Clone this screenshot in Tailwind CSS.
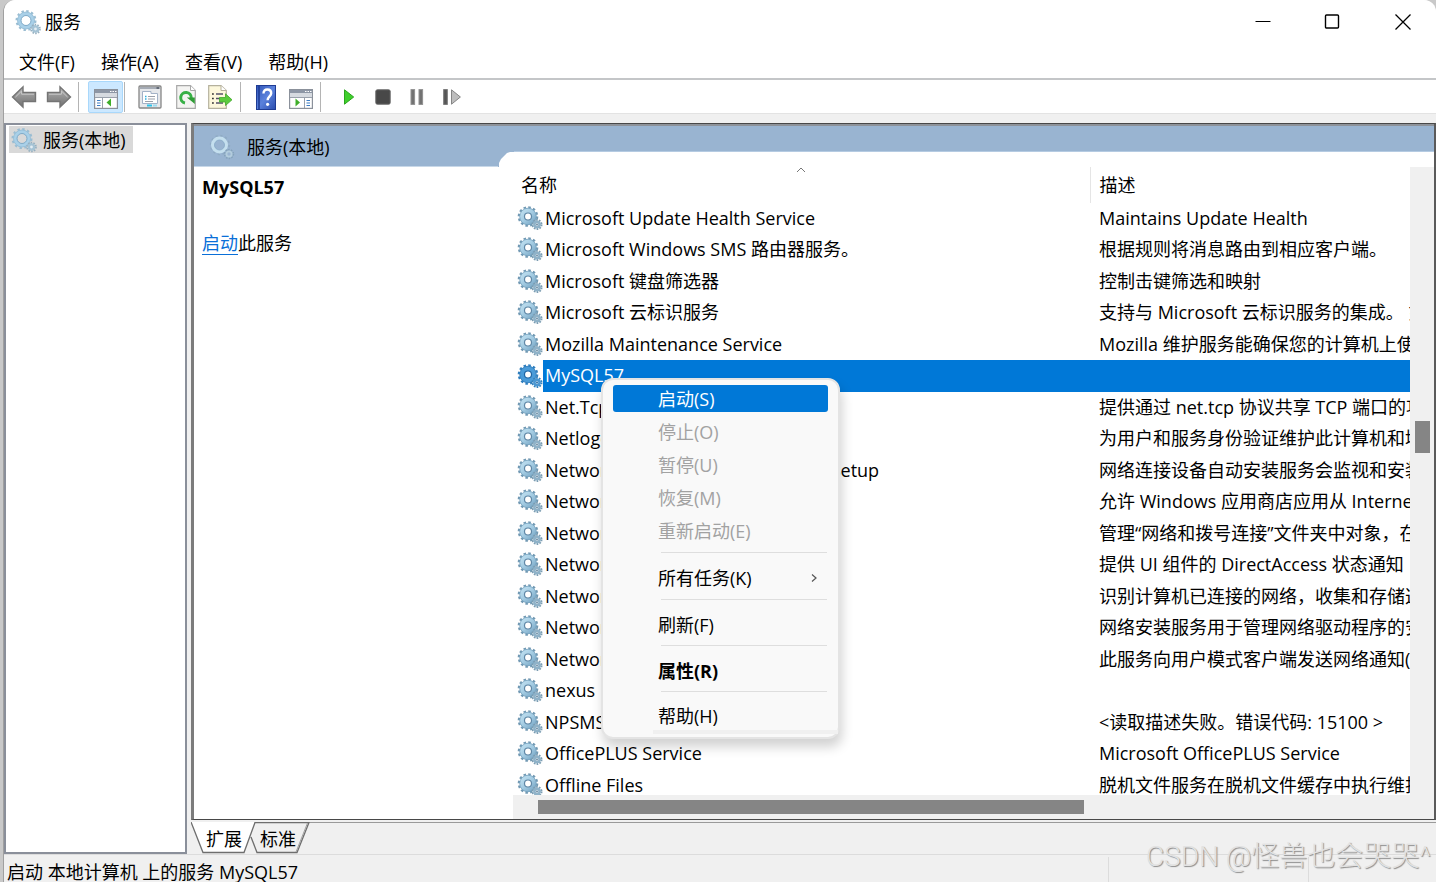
<!DOCTYPE html>
<html lang="zh-CN">
<head>
    <meta charset="UTF-8">
    <meta name="viewport" content="width=device-width, initial-scale=1.0">
    <title>服务</title>
    <script src="https://cdn.jsdelivr.net/npm/@tailwindcss/browser@4"></script>
</head>
<body class="relative h-screen overflow-hidden bg-[#c9c9c9] pl-[3px] font-['Open_Sans','Noto_Sans_CJK_SC',sans-serif] text-[18px] leading-6 text-black">

    <svg class="absolute size-0">
        <defs>
            <linearGradient id="gearFill" gradientUnits="userSpaceOnUse" x1="3" y1="3" x2="19" y2="20">
                <stop offset="0" stop-color="#c6e4f3"/>
                <stop offset="0.5" stop-color="#a3cbe2"/>
                <stop offset="1" stop-color="#6c9cbd"/>
            </linearGradient>
            <linearGradient id="grayFill" x1="0" y1="0" x2="0" y2="1">
                <stop offset="0" stop-color="#b5b5b5"/>
                <stop offset="1" stop-color="#6f6f6f"/>
            </linearGradient>
            <linearGradient id="helpFill" x1="0" y1="0" x2="1" y2="1">
                <stop offset="0" stop-color="#2f55b8"/>
                <stop offset="0.5" stop-color="#5b82dc"/>
                <stop offset="1" stop-color="#2a4cae"/>
            </linearGradient>
        </defs>
        <!-- list gears -->
        <symbol id="gear" viewBox="0 0 26 26">
            <circle cx="11" cy="11.500" r="9" fill="none" stroke="#7299b3" stroke-width="2.600" stroke-dasharray="2.500 2.212"/>
            <circle cx="11" cy="11.500" r="5.800" fill="none" stroke="url(#gearFill)" stroke-width="5.200"/>
            <circle cx="11" cy="11.500" r="8.300" fill="none" stroke="#6d9bb9" stroke-width="0.700"/>
            <circle cx="11" cy="11.500" r="3.500" fill="#fff" stroke="#5f87a6" stroke-width="1.200"/>
            <circle cx="20" cy="19.500" r="4.500" fill="none" stroke="#7c9db2" stroke-width="2" stroke-dasharray="1.600 1.227"/>
            <circle cx="20" cy="19.500" r="2.600" fill="#fff" stroke="#8fb2c8" stroke-width="2.600"/>
            <circle cx="20" cy="19.500" r="1" fill="#6f8ea4"/>
        </symbol>
        <symbol id="gearSelected" viewBox="0 0 26 26">
            <circle cx="11" cy="11.500" r="9" fill="none" stroke="#2f7fbf" stroke-width="2.600" stroke-dasharray="2.500 2.212"/>
            <circle cx="11" cy="11.500" r="5.800" fill="none" stroke="#4a9bd8" stroke-width="5.200"/>
            <circle cx="11" cy="11.500" r="8.300" fill="none" stroke="#2c76b4" stroke-width="0.700"/>
            <circle cx="11" cy="11.500" r="3.500" fill="#fff" stroke="#1d64a4" stroke-width="1.200"/>
            <circle cx="20" cy="19.500" r="4.500" fill="none" stroke="#3480bb" stroke-width="2" stroke-dasharray="1.600 1.227"/>
            <circle cx="20" cy="19.500" r="2.600" fill="#fff" stroke="#4a97d2" stroke-width="2.600"/>
            <circle cx="20" cy="19.500" r="1" fill="#2b6da4"/>
        </symbol>
        <!-- snap-in gears, thinner ring -->
        <symbol id="gearLight" viewBox="0 0 26 26">
            <circle cx="11" cy="11.500" r="9.300" fill="none" stroke="#9bbdd2" stroke-width="2.400" stroke-dasharray="2.400 2.469"/>
            <circle cx="11" cy="11.500" r="6.800" fill="none" stroke="#a9d0e8" stroke-width="4"/>
            <circle cx="11" cy="11.500" r="8.500" fill="none" stroke="#8db6cf" stroke-width="0.600"/>
            <circle cx="11" cy="11.500" r="5" fill="none" stroke="#7ba6c4" stroke-width="0.900"/>
            <circle cx="20.500" cy="20" r="4.300" fill="none" stroke="#96afbf" stroke-width="2" stroke-dasharray="1.500 1.200"/>
            <circle cx="20.500" cy="20" r="2.600" fill="#e4eef4" stroke="#a5c3d5" stroke-width="2.400"/>
        </symbol>
        <symbol id="gearPale" viewBox="0 0 26 26">
            <circle cx="11" cy="11" r="9.200" fill="none" stroke="#8fabc4" stroke-width="2" stroke-dasharray="2.200 2.617"/>
            <circle cx="10.500" cy="11" r="6.800" fill="none" stroke="#c4dfee" stroke-width="3.400"/>
            <circle cx="10.500" cy="11" r="5" fill="none" stroke="#86a9c6" stroke-width="0.800"/>
            <circle cx="20" cy="20" r="4.300" fill="none" stroke="#85a3bb" stroke-width="1.800" stroke-dasharray="1.500 1.200"/>
            <circle cx="20" cy="20" r="2.600" fill="none" stroke="#b3cddd" stroke-width="1.800"/>
        </symbol>
    </svg>

    <div class="flex h-full flex-col overflow-hidden rounded-t-xl border-l border-[#a0a0a0] bg-[#f0f0f0]">

        <header class="flex h-[44px] shrink-0 items-center bg-white pl-[11px]">
            <svg class="size-[26px]"><use href="#gearLight"/></svg>
            <h1 class="grow pl-1">服务</h1>
            <div class="flex items-center">
                <button aria-label="最小化" class="flex h-11 w-[70px] items-center justify-center">
                    <svg class="size-4" viewBox="0 0 16 16"><path d="M.5 7.500H15.500" stroke="#000" fill="none"/></svg>
                </button>
                <button aria-label="最大化" class="flex h-11 w-[68px] items-center justify-center">
                    <svg class="size-4" viewBox="0 0 16 16"><rect x="1.500" y="1" width="13" height="13" rx="1" stroke="#000" stroke-width="1.400" fill="none"/></svg>
                </button>
                <button aria-label="关闭" class="flex h-11 w-[70px] items-center justify-center pl-1">
                    <svg class="size-4" viewBox="0 0 16 16"><path d="M.5 .5L15.500 15.500M15.500 .5L.5 15.500" stroke="#000" stroke-width="1.300" fill="none"/></svg>
                </button>
            </div>
        </header>

        <nav class="flex h-[36px] shrink-0 items-center gap-[26px] border-b-2 border-[#c4c6c8] bg-white pl-[15px] pt-px">
            <button>文件(F)</button>
            <button>操作(A)</button>
            <button>查看(V)</button>
            <button>帮助(H)</button>
        </nav>

        <div class="flex h-[34px] shrink-0 items-center border-b border-[#e3e3e3] bg-white pl-[3px] pt-px">
            <button aria-label="后退" class="flex w-[34px] justify-center">
                <svg class="h-6 w-[26px]" viewBox="0 0 26 24"><path d="M1.500 12L12 1.800V7.500H24.500V16.500H12V22.200Z" fill="url(#grayFill)" stroke="#747474" stroke-width="1.400"/><path d="M4.500 12L10.600 6V9.200H23" fill="none" stroke="#c9c9c9"/></svg>
            </button>
            <button aria-label="前进" class="ml-px flex w-[34px] justify-center">
                <svg class="h-6 w-[26px]" viewBox="0 0 26 24"><path d="M24.500 12L14 1.800V7.500H1.500V16.500H14V22.200Z" fill="url(#grayFill)" stroke="#747474" stroke-width="1.400"/><path d="M3 9.200H15.400V6L21.500 12" fill="none" stroke="#c9c9c9"/></svg>
            </button>
            <span class="ml-[2px] h-[30px] w-px bg-[#b4b4b4]"></span>
            <button aria-label="显示/隐藏控制台树" class="ml-[9px] flex h-8 w-[35px] items-center justify-center rounded-[2px] border border-[#a9d8fb] bg-[#cce8ff] pt-[3px]">
                <svg class="h-5 w-6" viewBox="0 0 24 20">
                    <rect x=".6" y=".6" width="22.800" height="18.800" fill="#fff" stroke="#8b919b" stroke-width="1.200"/>
                    <rect x="1" y="1" width="22" height="3" fill="#8d96a5"/><path d="M16 2.500h1.500M18.500 2.500H20M21 2.500h1.500" stroke="#fff"/>
                    <rect x="1" y="4" width="22" height="4" fill="#d6dae0"/><path d="M1 8.500H23" stroke="#9aa1ac"/>
                    <path d="M8.500 8.500V19" stroke="#9aa1ac"/><path d="M3 11.500H6.500M3 14H6.500M3 16.500H6.500" stroke="#3b7cc4" stroke-width="1.200"/>
                    <path d="M17 9.500V17.500L12.500 13.500Z" fill="#3fae2a"/>
                </svg>
            </button>
            <span class="ml-px h-[30px] w-px bg-[#b4b4b4]"></span>
            <button aria-label="属性" class="ml-[8px] flex w-[34px] justify-center">
                <svg class="size-6" viewBox="0 0 24 24">
                    <rect x="1" y="1" width="22" height="22" rx="1" fill="#e6e8eb" stroke="#858585" stroke-width="1.300"/>
                    <path d="M2 3H22" stroke="#a5abb5" stroke-width="2"/><path d="M18.500 3H21" stroke="#4f5763" stroke-width="1.500"/>
                    <path d="M4.500 6.500H13V8.500H19.500V18.500H4.500Z" fill="#fff" stroke="#a3b2c7"/>
                    <path d="M7 11.500H8.500M7 14H8.500" stroke="#2fb0dd" stroke-width="1.400"/><path d="M10 11.500H17M10 14H17M7 16.500H15" stroke="#9aa0aa"/>
                    <rect x="9" y="19.500" width="5" height="2" fill="#2cc2ea"/><rect x="15" y="19.500" width="4" height="2" fill="#9bdcf0"/>
                </svg>
            </button>
            <button aria-label="刷新" class="ml-[2px] flex w-[34px] justify-center">
                <svg class="h-6 w-5" viewBox="0 0 20 24">
                    <path d="M.7 .7H14.500L19.300 5.500V23.300H.7Z" fill="#f4f4f2" stroke="#a8a8a8" stroke-width="1.200"/><path d="M14.500 .7V5.500H19.300" fill="#fff" stroke="#a8a8a8"/>
                    <path d="M9 18A5.300 5.300 0 1 1 15.300 13" fill="none" stroke="#37b046" stroke-width="3"/>
                    <path d="M10.800 12.500H18.800V19L16.500 17Z" fill="#2f9c35"/>
                </svg>
            </button>
            <button aria-label="导出列表" class="flex w-[34px] justify-center">
                <svg class="h-6 w-[26px]" viewBox="0 0 26 24">
                    <path d="M1.700 .7H14L19.300 5.500V23.300H1.700Z" fill="#fdf8dc" stroke="#b5b19d" stroke-width="1.200"/><path d="M14 .7V5.500H19.300" fill="#fff" stroke="#b5b19d"/>
                    <path d="M5 9H6.800M5 13.500H6.800M5 18H6.800" stroke="#333" stroke-width="1.500"/><path d="M9 9H16M9 13.500H13M9 18H16" stroke="#55536b" stroke-width="1.300"/>
                    <path d="M12.500 12.500H18.500V8.800L25 14.800L18.500 20.500V17H12.500Z" fill="#5ccb3e" stroke="#41a82c" stroke-width=".8"/>
                </svg>
            </button>
            <span class="ml-[3px] h-[30px] w-px bg-[#b4b4b4]"></span>
            <button aria-label="帮助" class="ml-[8px] flex w-[34px] justify-center">
                <svg class="h-[25px] w-5" viewBox="0 0 20 25">
                    <rect x=".5" y=".5" width="19" height="24" fill="url(#helpFill)" stroke="#1f3c94"/><path d="M3 1V24" stroke="#1d3a92" stroke-width="1.500"/>
                    <path d="M7.500 8.500C7.500 5.500 9.200 4.500 11.300 4.500C13.600 4.500 15.200 5.900 15.200 8.200C15.200 11.300 11.600 11.500 11.600 15.300" fill="none" stroke="#fff" stroke-width="2.400"/><circle cx="11.600" cy="19.300" r="1.600" fill="#fff"/>
                </svg>
            </button>
            <button aria-label="显示/隐藏操作窗格" class="ml-px flex w-[34px] justify-center pt-[3px]">
                <svg class="h-5 w-6" viewBox="0 0 24 20">
                    <rect x=".6" y=".6" width="22.800" height="18.800" fill="#fff" stroke="#8b919b" stroke-width="1.200"/>
                    <rect x="1" y="1" width="22" height="3" fill="#8d96a5"/><path d="M16 2.500h1.500M18.500 2.500H20M21 2.500h1.500" stroke="#fff"/>
                    <rect x="1" y="4" width="22" height="4" fill="#d6dae0"/><path d="M1 8.500H23" stroke="#9aa1ac"/>
                    <path d="M15.500 8.500V19" stroke="#9aa1ac"/><path d="M17.500 11.500H21M17.500 14H21M17.500 16.500H21" stroke="#3b7cc4" stroke-width="1.200"/>
                    <path d="M6.500 9.500V17.500L11 13.500Z" fill="#3fae2a"/>
                </svg>
            </button>
            <span class="ml-[2px] h-[30px] w-px bg-[#b4b4b4]"></span>
            <button aria-label="启动服务" class="ml-[11px] flex w-[34px] justify-center">
                <svg class="size-4" viewBox="0 0 16 16"><path d="M3.500 .8V15.200L12.700 8Z" fill="#3fcf2c" stroke="#2ca51e"/></svg>
            </button>
            <button aria-label="停止服务" class="flex w-[33px] justify-center">
                <svg class="size-4" viewBox="0 0 16 16"><rect x=".8" y=".8" width="14.400" height="14.400" rx="1.500" fill="#484848" stroke="#6a6a6a"/></svg>
            </button>
            <button aria-label="暂停服务" class="flex w-[35px] justify-center">
                <svg class="size-4" viewBox="0 0 16 16"><rect x="2" y=".6" width="3.600" height="14.800" fill="#727272" stroke="#909090"/><rect x="10" y=".6" width="3.600" height="14.800" fill="#727272" stroke="#909090"/></svg>
            </button>
            <button aria-label="重新启动服务" class="ml-px flex w-[34px] justify-center">
                <svg class="h-4 w-[18px]" viewBox="0 0 18 16"><rect x=".7" y=".6" width="3.600" height="14.800" fill="#555" stroke="#777"/><path d="M8.500 .8V15.200L17.400 8Z" fill="#bdbdbd" stroke="#858585"/></svg>
            </button>
        </div>

        <main class="flex min-h-0 grow gap-1 pt-[9px]">
            <aside class="w-[183px] shrink-0 border-2 border-[#8a8f9a] bg-white pl-[3px] pt-px">
                <a href="#" class="flex h-[27px] w-[124px] items-center bg-[#d9d9d9] pl-[2px]">
                    <svg class="size-[26px]"><use href="#gearLight"/></svg>
                    <span class="pl-[6px]">服务(本地)</span>
                </a>
            </aside>

            <div class="flex min-w-0 grow flex-col">
                <section class="flex min-h-0 grow flex-col border-y border-l-[3px] border-r-2 border-y-[#484848] border-l-[#7c7c7c] border-r-[#5a5a5a] bg-white">
                    <div class="flex h-[43px] shrink-0 border-t-2 border-[#8d9299]">
                        <div class="flex w-[304px] items-center border-b border-[#c8d8e8] bg-[#99b4d1] pl-[15px] pt-px">
                            <svg class="size-[26px]"><use href="#gearPale"/></svg>
                            <h2 class="pl-3">服务(本地)</h2>
                        </div>
                        <svg class="h-[41px] w-4 shrink-0" viewBox="0 0 16 41"><path d="M0 0H16V26H12L9 27L3 33L1 37V41H0Z" fill="#99b4d1"/></svg>
                        <div class="h-[26px] grow border-b border-[#b5cbe2] bg-[#99b4d1]"></div>
                    </div>

                    <div class="flex min-h-0 grow">
                        <div class="w-[319px] shrink-0 pl-2 pt-2">
                            <h3 class="font-bold">MySQL57</h3>
                            <p class="pt-8"><a href="#" class="text-[#0a6fd8] underline underline-offset-4">启动</a>此服务</p>
                        </div>

                        <div class="flex min-w-0 grow flex-col">
                            <div class="flex min-h-0 grow">
                                <div class="relative min-w-0 grow overflow-hidden">
                                    <svg class="absolute left-[283px] top-0 h-[6px] w-[10px]" viewBox="0 0 10 6"><path d="M1 5L5 1L9 5" fill="none" stroke="#777"/></svg>
                                    <table class="w-full table-fixed border-collapse text-left">
                                        <thead>
                                            <tr class="h-[36px]">
                                                <th class="w-[577px] border-r border-[#e5e5e5] pl-2 font-normal">名称</th>
                                                <th class="pl-[9px] font-normal">描述</th>
                                            </tr>
                                        </thead>
                                        <tbody id="servicios"></tbody>
                                    </table>
                                </div>
                                <div class="w-6 shrink-0 bg-[#f0f0f0] pt-[254px]">
                                    <div class="ml-[5px] h-8 w-[15px] bg-[#858585]"></div>
                                </div>
                            </div>
                            <div class="h-6 shrink-0 bg-[#f0f0f0] pl-[25px] pt-[5px]">
                                <div class="h-[14px] w-[546px] bg-[#858585]"></div>
                            </div>
                        </div>
                    </div>
                </section>

                <div class="h-[34px] shrink-0 pt-[2px]">
                    <div class="relative h-8 border-t border-[#9a9a9a]">
                        <svg class="absolute left-0 top-[-1px] h-8 w-[120px]" viewBox="0 0 120 32">
                            <path d="M0 0L12 30.500H53L64 0Z" fill="#fff"/>
                            <path d="M0 0L12 30.500H53L64 .5H118L106 30.500H66L60 15" fill="none" stroke="#6e6e6e" stroke-width="1.300"/>
                            <path d="M116.500 1L105 30" stroke="#a0a0a0"/>
                        </svg>
                        <div class="relative flex h-full items-center gap-[18px] pl-[15px]">
                            <button>扩展</button>
                            <button>标准</button>
                        </div>
                    </div>
                </div>
            </div>
        </main>

        <footer class="flex h-[28px] shrink-0 items-end border-t border-[#dcdcdc] pl-[3px]">
            <p class="grow translate-y-[2px]">启动 本地计算机 上的服务 MySQL57</p>
            <span class="h-[25px] w-[200px] border-l border-[#dcdcdc]"></span>
            <span class="h-[25px] w-[128px] border-l border-[#dcdcdc]"></span>
        </footer>
    </div>

    <div role="menu" class="absolute left-[601px] top-[378px] w-[239px] rounded-[12px] border-2 border-[#e4e4e4] bg-[#f9f9f9] pb-[3px] pt-[2px] shadow-[2px_8px_12px_rgba(0,0,0,0.18)]">
        <div class="px-[10px] py-[3px]"><button class="block h-[27px] w-full rounded-[3px] bg-[#0078d7] pl-[45px] text-left text-white">启动(S)</button></div>
        <button disabled class="block h-[33px] w-full pl-[55px] text-left text-[#a2a2a2]">停止(O)</button>
        <button disabled class="block h-[33px] w-full pl-[55px] text-left text-[#a2a2a2]">暂停(U)</button>
        <button disabled class="block h-[33px] w-full pl-[55px] text-left text-[#a2a2a2]">恢复(M)</button>
        <button disabled class="block h-[33px] w-full pl-[55px] text-left text-[#a2a2a2]">重新启动(E)</button>
        <hr class="mb-2 ml-[58px] mr-[11px] mt-[5px] border-[#dedede]">
        <button class="flex h-[33px] w-full items-center justify-between pl-[55px] pr-[21px]">所有任务(K)
            <svg class="h-[10px] w-[6px]" viewBox="0 0 6 10"><path d="M1 1.500L5 5L1 8.500" fill="none" stroke="#555" stroke-width="1.200"/></svg>
        </button>
        <hr class="mb-2 ml-[58px] mr-[11px] mt-[5px] border-[#dedede]">
        <button class="block h-[33px] w-full pl-[55px] text-left">刷新(F)</button>
        <hr class="mb-2 ml-[58px] mr-[11px] mt-1 border-[#dedede]">
        <button class="block h-[33px] w-full pl-[55px] text-left font-bold">属性(R)</button>
        <hr class="mb-2 ml-[58px] mr-[11px] mt-1 border-[#dedede]">
        <button class="block h-[30px] w-full pl-[55px] pt-[2px] text-left">帮助(H)</button>
        <div class="ml-[50px] h-1 bg-[#f0f0f0]"></div>
    </div>

    <p class="absolute bottom-[5px] right-[5px] font-['Roboto','Noto_Sans_CJK_SC',sans-serif] text-[28px] font-light leading-10 text-[#e2e2e2] [text-shadow:1px_1px_1px_#8a8a8a]">CSDN @怪兽也会哭哭^</p>

    <script>
        const servicios = [
            ["Microsoft Update Health Service", "Maintains Update Health"],
            ["Microsoft Windows SMS 路由器服务。", "根据规则将消息路由到相应客户端。"],
            ["Microsoft 键盘筛选器", "控制击键筛选和映射"],
            ["Microsoft 云标识服务", "支持与 Microsoft 云标识服务的集成。 如"],
            ["Mozilla Maintenance Service", "Mozilla 维护服务能确保您的计算机上使用"],
            ["MySQL57", ""],
            ["Net.Tcp Port Sharing Service", "提供通过 net.tcp 协议共享 TCP 端口的功能"],
            ["Netlogon", "为用户和服务身份验证维护此计算机和域"],
            ["Network Connected Devices Auto-Setup", "网络连接设备自动安装服务会监视和安装"],
            ["Network Connection Broker", "允许 Windows 应用商店应用从 Internet 接收"],
            ["Network Connections", "管理“网络和拨号连接”文件夹中对象，在其中"],
            ["Network Connectivity Assistant", "提供 UI 组件的 DirectAccess 状态通知"],
            ["Network List Service", "识别计算机已连接的网络，收集和存储这些"],
            ["Network Setup Service", "网络安装服务用于管理网络驱动程序的安装"],
            ["Network Store Interface Service", "此服务向用户模式客户端发送网络通知(例如"],
            ["nexus", ""],
            ["NPSMSvc", "<读取描述失败。错误代码: 15100 >"],
            ["OfficePLUS Service", "Microsoft OfficePLUS Service"],
            ["Offline Files", "脱机文件服务在脱机文件缓存中执行维护活动"]
        ];

        const tbody = document.getElementById("servicios");
        servicios.forEach(([nombre, descripcion]) => {
            const activo = nombre === "MySQL57";
            const fila = document.createElement("tr");
            fila.className = "odd:h-[31px] even:h-[32px]";
            fila.innerHTML = `
                <td class="${activo ? "p-0 pl-1" : "p-0 pb-[2px] pl-1"}">
                    <div class="flex items-center overflow-hidden">
                        <svg class="size-[26px] shrink-0"><use href="${activo ? "#gearSelected" : "#gear"}"/></svg>
                        <span class="${activo ? "h-[32px] grow bg-[#0078d7] leading-[30px] text-white" : ""} whitespace-nowrap pl-[2px]"></span>
                    </div>
                </td>
                <td class="${activo ? "bg-[#0078d7] p-0" : "p-0 pb-[2px] pl-[9px]"}"><div class="overflow-hidden whitespace-nowrap"></div></td>`;
            fila.querySelector("span").textContent = nombre;
            fila.querySelector("td:last-child div").textContent = descripcion;
            tbody.appendChild(fila);
        });
    </script>

</body>
</html>
